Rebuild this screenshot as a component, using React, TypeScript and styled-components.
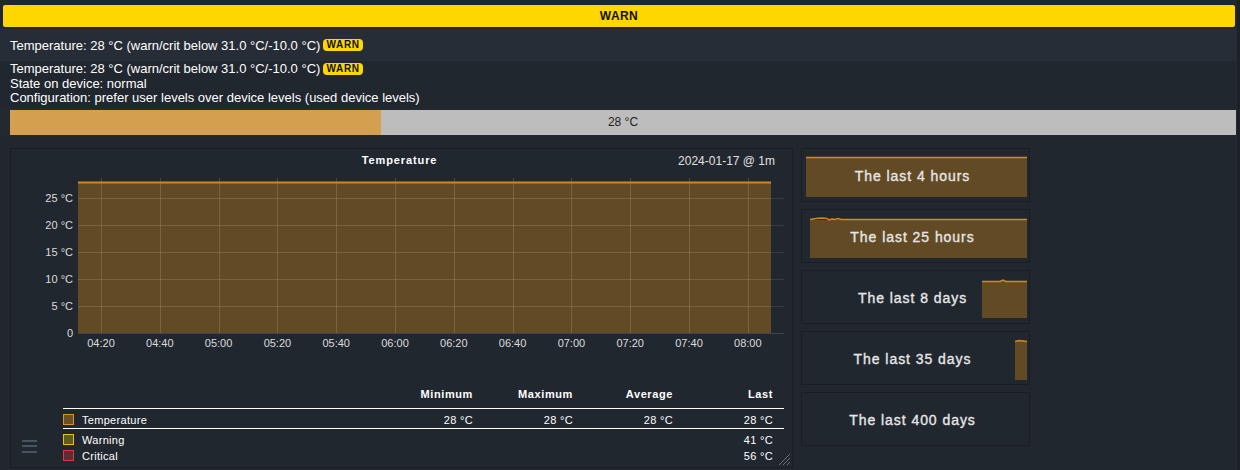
import styled, { createGlobalStyle } from 'styled-components'

const GlobalStyle = createGlobalStyle`
  html, body {
    margin: 0;
    padding: 0;
    background: #1c2027;
    font-family: "Liberation Sans", Arial, sans-serif;
    font-size: 13px;
    color: #ffffff;
  }
`

const Colors = {
  page: '#21272f',
  row: '#272d36',
  border: '#1a1e24',
  warn: '#ffd700',
  fill: '#624b24',
  line: '#d08a1c',
  text: '#e6e6e6',
}

const Page = styled.div`
  width: 1237px;
  height: 470px;
  overflow: hidden;
  background: ${Colors.page};
  padding-top: 5px;
  box-sizing: border-box;
`

const Banner = styled.div`
  height: 22px;
  margin: 0 2px 0 3px;
  background: ${Colors.warn};
  border-radius: 2px;
  color: #111;
  font-weight: bold;
  font-size: 12px;
  letter-spacing: 0.4px;
  display: flex;
  align-items: center;
  justify-content: center;
`

const SummaryRow = styled.div`
  margin-top: 2px;
  height: 32px;
  padding-left: 10px;
  background: ${Colors.row};
  display: flex;
  align-items: center;
`

const DetailBlock = styled.div`
  padding: 1px 10px 2px;
  line-height: 14.5px;
`

const Line = styled.div`
  display: flex;
  align-items: center;
`

const Badge = styled.span`
  margin-left: 3px;
  height: 12px;
  padding: 0 3px;
  border-radius: 4px;
  background: ${Colors.warn};
  color: #111;
  font-size: 10px;
  font-weight: bold;
  letter-spacing: 0.7px;
  line-height: 12px;
`

const GaugeWrap = styled.div`
  padding: 2px 1px 2px 10px;
  background: #242930;
`

const Gauge = styled.div`
  position: relative;
  height: 25px;
  background: #bdbdbd;
  display: flex;
  align-items: center;
  justify-content: center;
`

const GaugeFill = styled.div`
  position: absolute;
  left: 0;
  top: 0;
  bottom: 0;
  background: #d4a050;
`

const GaugeLabel = styled.span`
  position: relative;
  color: #222;
  font-size: 12px;
`

const Main = styled.div`
  margin-top: 11px;
  padding-left: 10px;
  display: flex;
  gap: 8px;
  align-items: flex-start;
`

const Panel = styled.div`
  position: relative;
  width: 783px;
  height: 320px;
  box-sizing: border-box;
  border: 1px solid ${Colors.border};
`

const PanelHeader = styled.div`
  position: relative;
  height: 23px;
  display: flex;
  align-items: center;
  justify-content: center;
`

const Title = styled.span`
  margin-right: 4px;
  font-size: 11px;
  font-weight: bold;
  letter-spacing: 0.9px;
  color: #fff;
`

const DateStamp = styled.span`
  position: absolute;
  right: 17px;
  top: 5px;
  font-size: 12px;
  color: #e0e0e0;
`

const Legend = styled.table`
  margin: 34px 0 0 52px;
  width: 721px;
  border-collapse: collapse;
  font-size: 11px;
  line-height: 14px;
`

const Th = styled.th`
  padding: 1px 11px 7px 0;
  text-align: right;
  font-weight: bold;
  letter-spacing: 0.6px;
  border-bottom: 1px solid #fff;
  width: 89px;
`

const NameTh = styled(Th)`
  width: auto;
`

const Td = styled.td<{ $top: number; $bottom?: number; $line?: boolean }>`
  padding: ${p => p.$top}px 11px ${p => p.$bottom ?? 0}px 0;
  text-align: right;
  letter-spacing: 0.3px;
  border-bottom: ${p => (p.$line ? '1px solid #fff' : 'none')};
  white-space: nowrap;
`

const NameTd = styled(Td)`
  text-align: left;
`

const NameCell = styled.span`
  display: flex;
  align-items: center;
  gap: 8px;
`

const Swatch = styled.span<{ $border: string; $bg: string }>`
  width: 9px;
  height: 9px;
  border: 1px solid ${p => p.$border};
  background: ${p => p.$bg};
  flex: none;
`

const Burger = styled.div`
  position: absolute;
  left: 11px;
  bottom: 14px;
  width: 15px;
  display: flex;
  flex-direction: column;
  gap: 3.5px;
  span {
    height: 2px;
    background: #465560;
  }
`

const Grip = styled.svg`
  position: absolute;
  right: 2px;
  bottom: 2px;
`

const Thumbs = styled.div`
  display: flex;
  flex-direction: column;
  gap: 7px;
`

const Thumb = styled.div`
  position: relative;
  width: 229px;
  height: 54px;
  box-sizing: border-box;
  border: 1px solid ${Colors.border};
  display: flex;
  align-items: center;
  justify-content: center;
`

const Spark = styled.svg`
  position: absolute;
  left: 0;
  top: 0;
`

const ThumbLabel = styled.span`
  position: relative;
  top: 1px;
  margin-right: 6px;
  font-size: 14px;
  letter-spacing: 0.95px;
  -webkit-text-stroke: 0.35px ${Colors.text};
  color: ${Colors.text};
`

const xTicks = ['04:20', '04:40', '05:00', '05:20', '05:40', '06:00', '06:20', '06:40', '07:00', '07:20', '07:40', '08:00']
const yTicks = [
  { y: 26, label: '25 °C' },
  { y: 53, label: '20 °C' },
  { y: 80, label: '15 °C' },
  { y: 107, label: '10 °C' },
  { y: 134, label: '5 °C' },
  { y: 161, label: '0' },
]

function Chart() {
  return (
    <svg width={781} height={180} style={{ display: 'block' }}>
      <rect x={67} y={10} width={693} height={151} fill={Colors.fill} />
      {yTicks.slice(0, 5).map(t => (
        <g key={t.y}>
          <line x1={67} x2={760} y1={t.y + 0.5} y2={t.y + 0.5} stroke="rgba(255,255,255,0.13)" />
          <line x1={760} x2={773} y1={t.y + 0.5} y2={t.y + 0.5} stroke="#353c46" />
        </g>
      ))}
      {xTicks.map((t, i) => {
        const x = Math.round(90 + i * 58.8) + 0.5
        return <line key={t} x1={x} x2={x} y1={6} y2={161} stroke="rgba(255,255,255,0.14)" />
      })}
      <line x1={67} x2={773} y1={161.5} y2={161.5} stroke="#3e4650" />
      <line x1={67} x2={760} y1={10.5} y2={10.5} stroke={Colors.line} strokeWidth={2} />
      {yTicks.map(t => (
        <text key={t.label} x={62} y={t.y + 4} textAnchor="end" fontSize={11} fill="#dcdcdc" fontFamily="Liberation Sans, Arial, sans-serif">
          {t.label}
        </text>
      ))}
      {xTicks.map((t, i) => (
        <text key={t} x={90 + i * 58.8} y={175} textAnchor="middle" fontSize={11} fill="#dcdcdc" fontFamily="Liberation Sans, Arial, sans-serif">
          {t}
        </text>
      ))}
    </svg>
  )
}

type ThumbSpec = { label: string; x: number; top: number; bottom: number; path?: string }

const thumbs: ThumbSpec[] = [
  { label: 'The last 4 hours', x: 4, top: 8, bottom: 48 },
  { label: 'The last 25 hours', x: 8, top: 10, bottom: 48, path: 'M8,9.5 L14,8.5 L20,8 L25,8.5 L27,10 L30,9 L33,9.5 L36,8.5 L39,9.5 L225,9.5' },
  { label: 'The last 8 days', x: 180, top: 10, bottom: 47, path: 'M180,10.5 L198,10.5 L201,9 L204,10.5 L225,10.5' },
  { label: 'The last 35 days', x: 213, top: 9, bottom: 48, path: 'M213,9.5 L217,8.5 L221,9 L225,9.5' },
  { label: 'The last 400 days', x: 0, top: 0, bottom: 0 },
]

function Sparkline({ spec }: { spec: ThumbSpec }) {
  if (!spec.bottom) return null
  return (
    <Spark width={227} height={52}>
      <rect x={spec.x} y={spec.top} width={225 - spec.x} height={spec.bottom - spec.top} fill={Colors.fill} />
      {spec.path ? (
        <path d={spec.path} fill="none" stroke={Colors.line} strokeWidth={1.5} />
      ) : (
        <line x1={spec.x} x2={225} y1={spec.top + 0.5} y2={spec.top + 0.5} stroke={Colors.line} strokeWidth={1.5} />
      )}
    </Spark>
  )
}

const statusText = 'Temperature: 28 °C (warn/crit below 31.0 °C/-10.0 °C)'

export default function App() {
  return (
    <>
      <GlobalStyle />
      <Page>
        <Banner>WARN</Banner>
        <SummaryRow>
          {statusText}
          <Badge>WARN</Badge>
        </SummaryRow>
        <DetailBlock>
          <Line>
            {statusText}
            <Badge>WARN</Badge>
          </Line>
          <Line>State on device: normal</Line>
          <Line>Configuration: prefer user levels over device levels (used device levels)</Line>
        </DetailBlock>
        <GaugeWrap>
          <Gauge>
            <GaugeFill style={{ width: '30.3%' }} />
            <GaugeLabel>28 °C</GaugeLabel>
          </Gauge>
        </GaugeWrap>
        <Main>
          <Panel>
            <PanelHeader>
              <Title>Temperature</Title>
              <DateStamp>2024-01-17 @ 1m</DateStamp>
            </PanelHeader>
            <Chart />
            <Legend>
              <thead>
                <tr>
                  <NameTh />
                  <Th>Minimum</Th>
                  <Th>Maximum</Th>
                  <Th>Average</Th>
                  <Th>Last</Th>
                </tr>
              </thead>
              <tbody>
                <tr>
                  <NameTd $top={4} $bottom={1} $line>
                    <NameCell>
                      <Swatch $border="#e0921c" $bg="#6a5028" />
                      Temperature
                    </NameCell>
                  </NameTd>
                  <Td $top={4} $bottom={1} $line>28 °C</Td>
                  <Td $top={4} $bottom={1} $line>28 °C</Td>
                  <Td $top={4} $bottom={1} $line>28 °C</Td>
                  <Td $top={4} $bottom={1} $line>28 °C</Td>
                </tr>
                <tr>
                  <NameTd $top={4}>
                    <NameCell>
                      <Swatch $border="#e8c400" $bg="#615a24" />
                      Warning
                    </NameCell>
                  </NameTd>
                  <Td $top={4} />
                  <Td $top={4} />
                  <Td $top={4} />
                  <Td $top={4}>41 °C</Td>
                </tr>
                <tr>
                  <NameTd $top={2}>
                    <NameCell>
                      <Swatch $border="#d83c3c" $bg="#622a32" />
                      Critical
                    </NameCell>
                  </NameTd>
                  <Td $top={2} />
                  <Td $top={2} />
                  <Td $top={2} />
                  <Td $top={2}>56 °C</Td>
                </tr>
              </tbody>
            </Legend>
            <Burger>
              <span />
              <span />
              <span />
            </Burger>
            <Grip width={12} height={12}>
              <path d="M12,1 L1,12 M12,5 L5,12 M12,9 L9,12" stroke="#6a6f76" strokeWidth={1} />
            </Grip>
          </Panel>
          <Thumbs>
            {thumbs.map(t => (
              <Thumb key={t.label}>
                <Sparkline spec={t} />
                <ThumbLabel>{t.label}</ThumbLabel>
              </Thumb>
            ))}
          </Thumbs>
        </Main>
      </Page>
    </>
  )
}
